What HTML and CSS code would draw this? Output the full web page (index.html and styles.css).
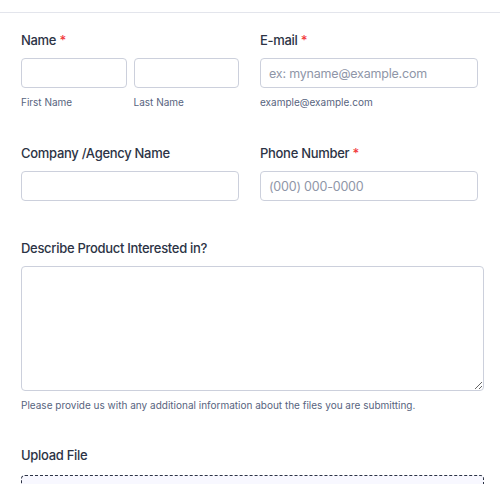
FILE: index.html
```html
<!DOCTYPE html>
<html lang="en">
<head>
  <meta charset="UTF-8" />
  <title>Product Inquiry</title>
  <link rel="stylesheet" href="styles.css">
</head>
<body>
  <div class="topbar"></div>

  <form class="form">
    <div class="row">
      <div class="field">
        <label class="label">Name <span class="req">*</span></label>
        <div class="split">
          <div class="sub">
            <input class="input" type="text" />
            <span class="sublabel">First Name</span>
          </div>
          <div class="sub">
            <input class="input" type="text" />
            <span class="sublabel">Last Name</span>
          </div>
        </div>
      </div>
      <div class="field">
        <label class="label">E-mail <span class="req">*</span></label>
        <input class="input" type="email" placeholder="ex: myname@example.com" />
        <span class="sublabel">example@example.com</span>
      </div>
    </div>

    <div class="row second">
      <div class="field">
        <label class="label">Company /Agency Name</label>
        <input class="input" type="text" />
      </div>
      <div class="field">
        <label class="label">Phone Number <span class="req">*</span></label>
        <input class="input" type="tel" placeholder="(000) 000-0000" />
      </div>
    </div>

    <div class="row wide">
      <div class="field">
        <label class="label">Describe Product Interested in?</label>
        <textarea class="textarea"></textarea>
        <span class="sublabel">Please provide us with any additional information about the files you are submitting.</span>
      </div>
    </div>

    <div class="row wide">
      <div class="field">
        <label class="label">Upload File</label>
        <div class="dropzone"></div>
      </div>
    </div>
  </form>
</body>
</html>
```

FILE: styles.css
```css
* {
  box-sizing: border-box;
}

body {
  margin: 0;
  padding: 0;
  background: #fff;
  font-family: Inter, 'Noto Sans', sans-serif;
  color: #2c3345;
  overflow: hidden;
}

.topbar {
  height: 13px;
  border-bottom: 1px solid #e3e5ec;
}

.form {
  padding: 17px 16px 0 21px;
}

.row {
  display: grid;
  grid-template-columns: 218px 218px;
  column-gap: 21px;
  margin-bottom: 34px;
}

.row.second {
  margin-bottom: 37px;
}

.row.wide {
  grid-template-columns: 463px;
  margin-bottom: 33px;
}

.field {
  display: flex;
  flex-direction: column;
}

.label {
  font-size: 13px;
  font-weight: 500;
  letter-spacing: -0.3px;
  line-height: 20px;
  margin-bottom: 8px;
}

.req {
  color: #f23a3c;
}

.split {
  display: flex;
  gap: 7px;
}

.sub {
  flex: 1;
  display: flex;
  flex-direction: column;
}

.input {
  width: 100%;
  height: 30px;
  padding: 0 8px;
  border: 1px solid #ccd0dc;
  border-radius: 4px;
  font-family: inherit;
  font-size: 12.5px;
  letter-spacing: -0.2px;
  color: #2c3345;
  background: #fff;
}

.input::placeholder {
  color: #8f96a8;
}

.sublabel {
  margin-top: 7px;
  font-size: 10px;
  line-height: 14px;
  color: #57647e;
}

.textarea {
  width: 100%;
  height: 125px;
  border: 1px solid #ccd0dc;
  border-radius: 4px;
  font-family: inherit;
  display: block;
}

.dropzone {
  height: 80px;
  border: 1px dashed #2c3345;
  border-radius: 4px;
  background: #f8f8ff;
  margin-top: 2px;
}
```
